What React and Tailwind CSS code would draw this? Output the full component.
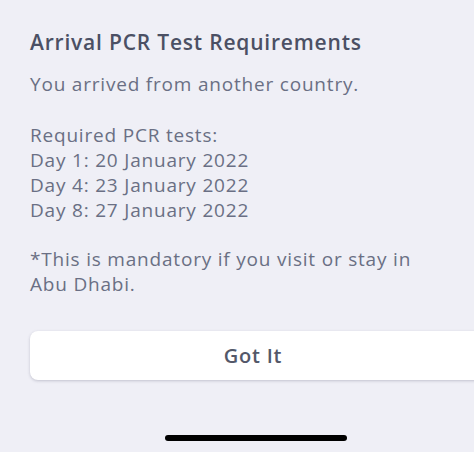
export default function App() {
  return (
    <div
      className="w-[474px] h-[452px] bg-[#efeff6] overflow-hidden flex flex-col pl-[30px] relative"
      style={{ fontFamily: '"Open Sans", "Noto Sans", sans-serif' }}
    >
      <h1 className="mt-[28px] text-[21px] leading-[28px] font-semibold tracking-[0.8px] text-[#4b5064]">
        Arrival PCR Test Requirements
      </h1>
      <div className="mt-[16px] text-[19px] leading-[25px] font-medium tracking-[0.8px] text-[#6a6f84]">
        <p>You arrived from another country.</p>
        <p className="mt-[26px]">Required PCR tests:</p>
        <p>Day 1: 20 January 2022</p>
        <p>Day 4: 23 January 2022</p>
        <p>Day 8: 27 January 2022</p>
        <p className="mt-[24px]">*This is mandatory if you visit or stay in</p>
        <p>Abu Dhabi.</p>
      </div>
      <button className="mt-[34px] w-[460px] h-[49px] bg-white rounded-[8px] shadow-[0_1px_3px_rgba(60,60,90,0.25)] text-[20px] font-semibold tracking-[0.8px] text-[#535869] pr-[14px]">
        Got It
      </button>
      <div className="mt-[55px] ml-[135px] w-[182px] h-[6px] rounded-full bg-black" />
    </div>
  );
}
